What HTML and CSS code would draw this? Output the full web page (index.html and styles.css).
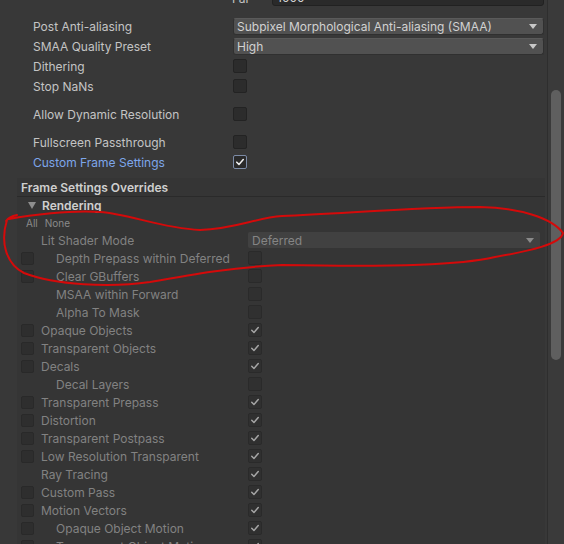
FILE: index.html
```html
<!DOCTYPE html>
<html>
<head>
<meta charset="utf-8">
<link rel="stylesheet" href="styles.css">
</head>
<body>
<div class="window">
  <div class="content">
    <div class="prop far-row">
      <span class="label far-label">Far</span>
      <div class="textfield">1000</div>
    </div>
    <div class="prop">
      <span class="label">Post Anti-aliasing</span>
      <div class="dropdown"><span>Subpixel Morphological Anti-aliasing (SMAA)</span><i class="arrow"></i></div>
    </div>
    <div class="prop">
      <span class="label">SMAA Quality Preset</span>
      <div class="dropdown"><span>High</span><i class="arrow"></i></div>
    </div>
    <div class="prop">
      <span class="label">Dithering</span>
      <span class="cb"></span>
    </div>
    <div class="prop">
      <span class="label">Stop NaNs</span>
      <span class="cb"></span>
    </div>
    <div class="prop spaced">
      <span class="label">Allow Dynamic Resolution</span>
      <span class="cb"></span>
    </div>
    <div class="prop spaced">
      <span class="label">Fullscreen Passthrough</span>
      <span class="cb"></span>
    </div>
    <div class="prop">
      <span class="label blue">Custom Frame Settings</span>
      <span class="cb checked focus"><svg viewBox="0 0 14 14"><polyline points="3.2,7.2 5.8,9.8 10.8,4.2"/></svg></span>
    </div>

    <div class="group">
      <div class="group-title">Frame Settings Overrides</div>
      <div class="foldout"><i class="tri"></i><span>Rendering</span></div>
      <div class="allnone"><span>All</span><span>None</span></div>

      <div class="orow"><span class="oslot"></span><span class="olabel">Lit Shader Mode</span><div class="odrop"><span>Deferred</span><i class="arrow dim"></i></div></div>
      <div class="orow"><span class="oslot"><span class="ocb"></span></span><span class="olabel sub">Depth Prepass within Deferred</span><span class="vcb"></span></div>
      <div class="orow"><span class="oslot"><span class="ocb"></span></span><span class="olabel sub">Clear GBuffers</span><span class="vcb"></span></div>
      <div class="orow"><span class="oslot"></span><span class="olabel sub">MSAA within Forward</span><span class="vcb"></span></div>
      <div class="orow"><span class="oslot"></span><span class="olabel sub">Alpha To Mask</span><span class="vcb"></span></div>
      <div class="orow"><span class="oslot"><span class="ocb"></span></span><span class="olabel">Opaque Objects</span><span class="vcb on"><svg viewBox="0 0 14 14"><polyline points="3.2,7.2 5.8,9.8 10.8,4.2"/></svg></span></div>
      <div class="orow"><span class="oslot"><span class="ocb"></span></span><span class="olabel">Transparent Objects</span><span class="vcb on"><svg viewBox="0 0 14 14"><polyline points="3.2,7.2 5.8,9.8 10.8,4.2"/></svg></span></div>
      <div class="orow"><span class="oslot"><span class="ocb"></span></span><span class="olabel">Decals</span><span class="vcb on"><svg viewBox="0 0 14 14"><polyline points="3.2,7.2 5.8,9.8 10.8,4.2"/></svg></span></div>
      <div class="orow"><span class="oslot"></span><span class="olabel sub">Decal Layers</span><span class="vcb"></span></div>
      <div class="orow"><span class="oslot"><span class="ocb"></span></span><span class="olabel">Transparent Prepass</span><span class="vcb on"><svg viewBox="0 0 14 14"><polyline points="3.2,7.2 5.8,9.8 10.8,4.2"/></svg></span></div>
      <div class="orow"><span class="oslot"><span class="ocb"></span></span><span class="olabel">Distortion</span><span class="vcb on"><svg viewBox="0 0 14 14"><polyline points="3.2,7.2 5.8,9.8 10.8,4.2"/></svg></span></div>
      <div class="orow"><span class="oslot"><span class="ocb"></span></span><span class="olabel">Transparent Postpass</span><span class="vcb on"><svg viewBox="0 0 14 14"><polyline points="3.2,7.2 5.8,9.8 10.8,4.2"/></svg></span></div>
      <div class="orow"><span class="oslot"><span class="ocb"></span></span><span class="olabel">Low Resolution Transparent</span><span class="vcb on"><svg viewBox="0 0 14 14"><polyline points="3.2,7.2 5.8,9.8 10.8,4.2"/></svg></span></div>
      <div class="orow"><span class="oslot"></span><span class="olabel">Ray Tracing</span><span class="vcb on"><svg viewBox="0 0 14 14"><polyline points="3.2,7.2 5.8,9.8 10.8,4.2"/></svg></span></div>
      <div class="orow"><span class="oslot"><span class="ocb"></span></span><span class="olabel">Custom Pass</span><span class="vcb on"><svg viewBox="0 0 14 14"><polyline points="3.2,7.2 5.8,9.8 10.8,4.2"/></svg></span></div>
      <div class="orow"><span class="oslot"><span class="ocb"></span></span><span class="olabel">Motion Vectors</span><span class="vcb on"><svg viewBox="0 0 14 14"><polyline points="3.2,7.2 5.8,9.8 10.8,4.2"/></svg></span></div>
      <div class="orow"><span class="oslot"><span class="ocb"></span></span><span class="olabel sub">Opaque Object Motion</span><span class="vcb on"><svg viewBox="0 0 14 14"><polyline points="3.2,7.2 5.8,9.8 10.8,4.2"/></svg></span></div>
      <div class="orow"><span class="oslot"><span class="ocb"></span></span><span class="olabel sub">Transparent Object Motion</span><span class="vcb on"><svg viewBox="0 0 14 14"><polyline points="3.2,7.2 5.8,9.8 10.8,4.2"/></svg></span></div>
    </div>
  </div>
  <div class="scrollbar"><div class="thumb"></div></div>

  <svg class="annotation" viewBox="0 0 564 544" width="564" height="544">
    <path d="M 17 215 C 12 216, 8 218, 6 221 M 9 219 C 30 215, 70 210, 100 212 C 130 214, 160 228, 200 230 C 235 229, 255 218, 282 216 C 350 213, 420 207, 480 207 C 520 208, 552 218, 563 233 C 561 244, 530 251, 495 257 C 460 265, 400 267, 282 265 C 235 267, 195 274, 150 282 C 110 288, 55 285, 24 273 C 6 264, 0 242, 7 220"/>
  </svg>
</div>
</body>
</html>
```

FILE: styles.css
```css
* { box-sizing: border-box; }
html, body {
  margin: 0;
  padding: 0;
  background: #383838;
  width: 564px;
  height: 544px;
  overflow: hidden;
}
body {
  font-family: Inter, "Noto Sans", sans-serif;
  font-size: 12px;
  color: #c4c4c4;
}
.window {
  position: relative;
  display: flex;
  width: 564px;
  height: 544px;
  overflow: hidden;
}
.content {
  width: 547px;
  display: flex;
  flex-direction: column;
  padding-right: 3px;
}
.prop {
  display: flex;
  align-items: center;
  height: 20px;
  padding-left: 33px;
  flex-shrink: 0;
}
.prop.spaced { margin-top: 8px; }
.far-row {
  height: 16px;
  margin-top: -10px;
  margin-bottom: 10px;
}
.label {
  width: 200px;
  flex-shrink: 0;
  white-space: nowrap;
}
.far-label {
  width: 40px;
  margin-left: 199px;
}
.blue { color: #7da6ea; }
.textfield {
  flex: 1;
  height: 16px;
  background: #2a2a2a;
  border: 1px solid #212121;
  border-radius: 3px;
  padding-left: 4px;
  line-height: 14px;
  color: #d2d2d2;
}
.dropdown {
  flex: 1;
  height: 17px;
  background: #515151;
  border: 1px solid #303030;
  border-top-color: #5a5a5a;
  border-radius: 3px;
  display: flex;
  align-items: center;
  padding: 0 6px 0 3px;
  color: #d2d2d2;
}
.dropdown span, .odrop span { flex: 1; white-space: nowrap; }
.arrow {
  width: 0;
  height: 0;
  border-left: 4px solid transparent;
  border-right: 4px solid transparent;
  border-top: 5px solid #c8c8c8;
}
.arrow.dim { border-top-color: #8a8a8a; }
.cb {
  width: 14px;
  height: 14px;
  background: #2c2c2c;
  border: 1px solid #232323;
  border-radius: 2px;
  display: flex;
  align-items: center;
  justify-content: center;
}
.cb.focus { border-color: #7c8ba6; background: #2a2a2a; }
.cb svg, .vcb svg { width: 14px; height: 14px; }
.cb svg polyline {
  fill: none;
  stroke: #f0f0f0;
  stroke-width: 1.8;
  stroke-linecap: round;
  stroke-linejoin: round;
}

.group {
  margin-top: 6px;
  margin-left: 17px;
  width: 528px;
  background: #353535;
  display: flex;
  flex-direction: column;
}
.group-title {
  height: 19px;
  line-height: 19px;
  padding-left: 4px;
  font-weight: 600;
  color: #cfcfcf;
  border-bottom: 1px solid #2a2a2a;
}
.foldout {
  height: 17px;
  display: flex;
  align-items: center;
  padding-left: 11px;
  font-weight: 600;
  color: #cfcfcf;
}
.tri {
  width: 0;
  height: 0;
  border-left: 4px solid transparent;
  border-right: 4px solid transparent;
  border-top: 7px solid #8e8e8e;
  margin-right: 6px;
}
.allnone {
  height: 17px;
  display: flex;
  align-items: center;
  padding-left: 9px;
  font-size: 10px;
  color: #8a8a8a;
  gap: 7px;
}
.orow {
  height: 18px;
  display: flex;
  align-items: center;
  padding-left: 4px;
  padding-right: 5px;
  flex-shrink: 0;
}
.oslot {
  width: 13px;
  height: 13px;
  flex-shrink: 0;
}
.ocb {
  display: block;
  width: 13px;
  height: 13px;
  background: #2e2e2e;
  border: 1px solid #292929;
  border-radius: 2px;
}
.olabel {
  width: 207px;
  margin-left: 7px;
  flex-shrink: 0;
  white-space: nowrap;
  color: #828282;
}
.olabel.sub { padding-left: 15px; }
.vcb {
  width: 14px;
  height: 14px;
  background: #303030;
  border: 1px solid #2a2a2a;
  border-radius: 2px;
  display: flex;
  align-items: center;
  justify-content: center;
}
.vcb svg polyline {
  fill: none;
  stroke: #a6a6a6;
  stroke-width: 1.7;
  stroke-linecap: round;
  stroke-linejoin: round;
}
.odrop {
  flex: 1;
  height: 16px;
  background: #414141;
  border-radius: 2px;
  display: flex;
  align-items: center;
  padding: 0 6px 0 4px;
  color: #858585;
}

.scrollbar {
  width: 17px;
  flex-shrink: 0;
  background: #3a3a3a;
  border-left: 1px solid #2e2e2e;
  padding-left: 3px;
}
.thumb {
  margin-top: 90px;
  width: 10px;
  height: 270px;
  background: #5f5f5f;
  border-radius: 5px;
}

.annotation {
  position: absolute;
  left: 0;
  top: 0;
  pointer-events: none;
}
.annotation path {
  fill: none;
  stroke: #d40a0a;
  stroke-width: 2;
  stroke-linecap: round;
  stroke-linejoin: round;
}
```
